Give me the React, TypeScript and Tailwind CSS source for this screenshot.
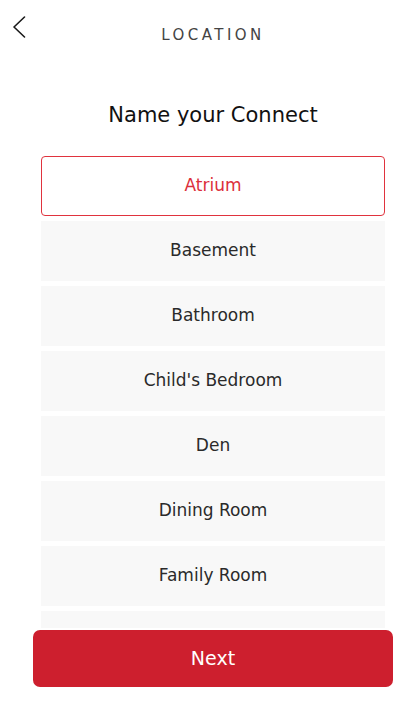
const rooms = [
  'Atrium',
  'Basement',
  'Bathroom',
  "Child's Bedroom",
  'Den',
  'Dining Room',
  'Family Room',
  'Garage',
];

function BackArrow() {
  return (
    <svg width="14" height="22" viewBox="0 0 14 22" fill="none">
      <polyline
        points="12.5,1 2,11 12.5,21"
        stroke="#1a1a1a"
        strokeWidth="1.6"
        strokeLinecap="round"
        strokeLinejoin="round"
      />
    </svg>
  );
}

export default function App() {
  const selected = 'Atrium';

  return (
    <div
      className="relative flex h-[718px] w-[417px] flex-col overflow-hidden bg-white pl-[9px] text-[#222]"
      style={{ fontFamily: '"DejaVu Sans", "Noto Sans", sans-serif' }}
    >
      <button className="absolute left-[12px] top-[16px]">
        <BackArrow />
      </button>

      <div className="h-[68px] shrink-0 pt-[24px] text-center text-[15px] tracking-[0.23em] text-[#444]">
        LOCATION
      </div>

      <h1 className="mt-[32px] text-center text-[21px] text-[#111]">Name your Connect</h1>

      <div className="mt-[23px] flex min-h-0 flex-1 flex-col gap-[5px] overflow-hidden px-[32px] pt-[1px]">
        {rooms.map((room) =>
          room === selected ? (
            <div
              key={room}
              className="flex h-[60px] shrink-0 items-center justify-center rounded-[4px] border border-[#e0333e] bg-white text-[17px] text-[#dc2f3b]"
            >
              {room}
            </div>
          ) : (
            <div
              key={room}
              className="flex h-[60px] shrink-0 items-center justify-center bg-[#f8f8f8] text-[17px] text-[#2a2a2a]"
            >
              {room}
            </div>
          )
        )}
      </div>

      <div className="shrink-0 px-[24px] pb-[31px] pt-[2px]">
        <button className="flex h-[57px] w-full items-center justify-center rounded-[7px] bg-[#cd1f2e] text-[19px] text-white">
          Next
        </button>
      </div>
    </div>
  );
}
